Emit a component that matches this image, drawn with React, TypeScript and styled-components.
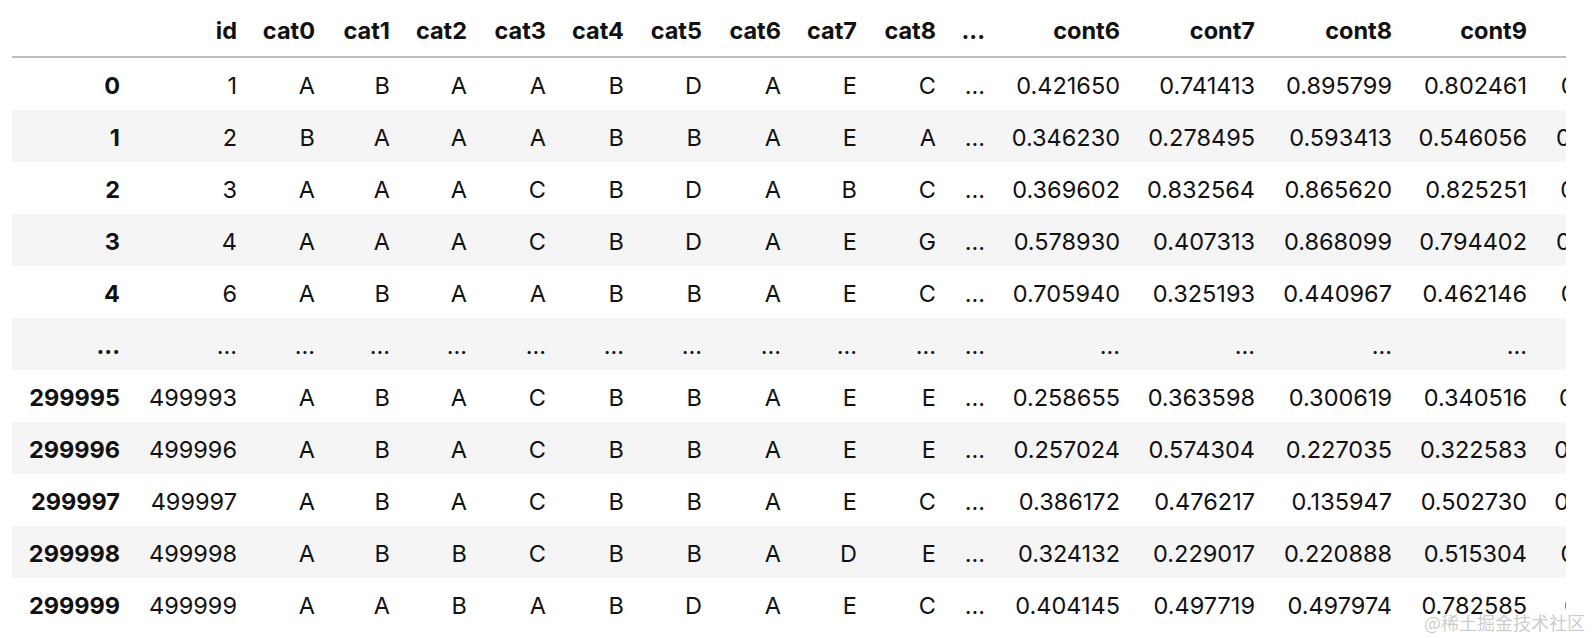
import React from "react";
import styled, { createGlobalStyle } from "styled-components";

const GlobalStyle = createGlobalStyle`
  html, body {
    margin: 0;
    padding: 0;
    background: #ffffff;
  }
  body {
    font-family: Inter, "Noto Sans", "Liberation Sans", sans-serif;
    color: #111111;
  }
`;

const Page = styled.div`
  position: relative;
  width: 1592px;
  height: 638px;
  overflow: hidden;
  background: #ffffff;
`;

const Scroller = styled.div`
  margin-left: 12px;
  width: 1554px;
  overflow: hidden;
`;

const Table = styled.table`
  border-collapse: collapse;
  border-spacing: 0;
  table-layout: fixed;
  width: 1662px;
  font-size: 23.5px;
  line-height: 28px;
  color: #111111;
`;

const Col = styled.col<{ $w: number }>`
  width: ${(p) => p.$w}px;
`;

const HeadRow = styled.tr`
  border-bottom: 2px solid #bdbdbd;
`;

const HeadCell = styled.th`
  padding: 17px 12px 11px;
  text-align: right;
  font-weight: 700;
  white-space: nowrap;
  overflow: hidden;
`;

const Row = styled.tr<{ $striped: boolean }>`
  background: ${(p) => (p.$striped ? "#f5f5f5" : "#ffffff")};
`;

const IndexCell = styled.th`
  height: 52px;
  box-sizing: border-box;
  padding: 14px 12px 10px;
  text-align: right;
  font-weight: 700;
  white-space: nowrap;
`;

const Cell = styled.td`
  height: 52px;
  box-sizing: border-box;
  padding: 14px 12px 10px;
  text-align: right;
  font-weight: 400;
  white-space: nowrap;
  overflow: hidden;
`;

const Watermark = styled.div`
  position: absolute;
  right: 7px;
  bottom: 5px;
  font-family: "Noto Sans CJK SC", "Noto Sans", sans-serif;
  font-size: 18px;
  line-height: 22px;
  color: rgba(160, 160, 160, 0.55);
  letter-spacing: 0;
  white-space: nowrap;
`;

const widths = [120, 117, 78, 75, 77, 79, 78, 78, 79, 76, 79, 49, 135, 135, 137, 135, 135];

const headers = [
  "",
  "id",
  "cat0",
  "cat1",
  "cat2",
  "cat3",
  "cat4",
  "cat5",
  "cat6",
  "cat7",
  "cat8",
  "...",
  "cont6",
  "cont7",
  "cont8",
  "cont9",
  "cont10",
];

const rows: string[][] = [
  ["0", "1", "A", "B", "A", "A", "B", "D", "A", "E", "C", "...", "0.421650", "0.741413", "0.895799", "0.802461", "0.713258"],
  ["1", "2", "B", "A", "A", "A", "B", "B", "A", "E", "A", "...", "0.346230", "0.278495", "0.593413", "0.546056", "0.730526"],
  ["2", "3", "A", "A", "A", "C", "B", "D", "A", "B", "C", "...", "0.369602", "0.832564", "0.865620", "0.825251", "0.765431"],
  ["3", "4", "A", "A", "A", "C", "B", "D", "A", "E", "G", "...", "0.578930", "0.407313", "0.868099", "0.794402", "0.839078"],
  ["4", "6", "A", "B", "A", "A", "B", "B", "A", "E", "C", "...", "0.705940", "0.325193", "0.440967", "0.462146", "0.702138"],
  ["...", "...", "...", "...", "...", "...", "...", "...", "...", "...", "...", "...", "...", "...", "...", "...", "..."],
  ["299995", "499993", "A", "B", "A", "C", "B", "B", "A", "E", "E", "...", "0.258655", "0.363598", "0.300619", "0.340516", "0.412538"],
  ["299996", "499996", "A", "B", "A", "C", "B", "B", "A", "E", "E", "...", "0.257024", "0.574304", "0.227035", "0.322583", "0.509586"],
  ["299997", "499997", "A", "B", "A", "C", "B", "B", "A", "E", "C", "...", "0.386172", "0.476217", "0.135947", "0.502730", "0.503926"],
  ["299998", "499998", "A", "B", "B", "C", "B", "B", "A", "D", "E", "...", "0.324132", "0.229017", "0.220888", "0.515304", "0.712893"],
  ["299999", "499999", "A", "A", "B", "A", "B", "D", "A", "E", "C", "...", "0.404145", "0.497719", "0.497974", "0.782585", "0.613108"],
];

export default function App() {
  return (
    <Page>
      <GlobalStyle />
      <Scroller>
        <Table>
          <colgroup>
            {widths.map((w, i) => (
              <Col key={i} $w={w} />
            ))}
          </colgroup>
          <thead>
            <HeadRow>
              {headers.map((h, i) => (
                <HeadCell key={i}>{h}</HeadCell>
              ))}
            </HeadRow>
          </thead>
          <tbody>
            {rows.map((r, ri) => (
              <Row key={ri} $striped={ri % 2 === 1}>
                <IndexCell>{r[0]}</IndexCell>
                {r.slice(1).map((v, ci) => (
                  <Cell key={ci}>{v}</Cell>
                ))}
              </Row>
            ))}
          </tbody>
        </Table>
      </Scroller>
      <Watermark>@稀土掘金技术社区</Watermark>
    </Page>
  );
}
